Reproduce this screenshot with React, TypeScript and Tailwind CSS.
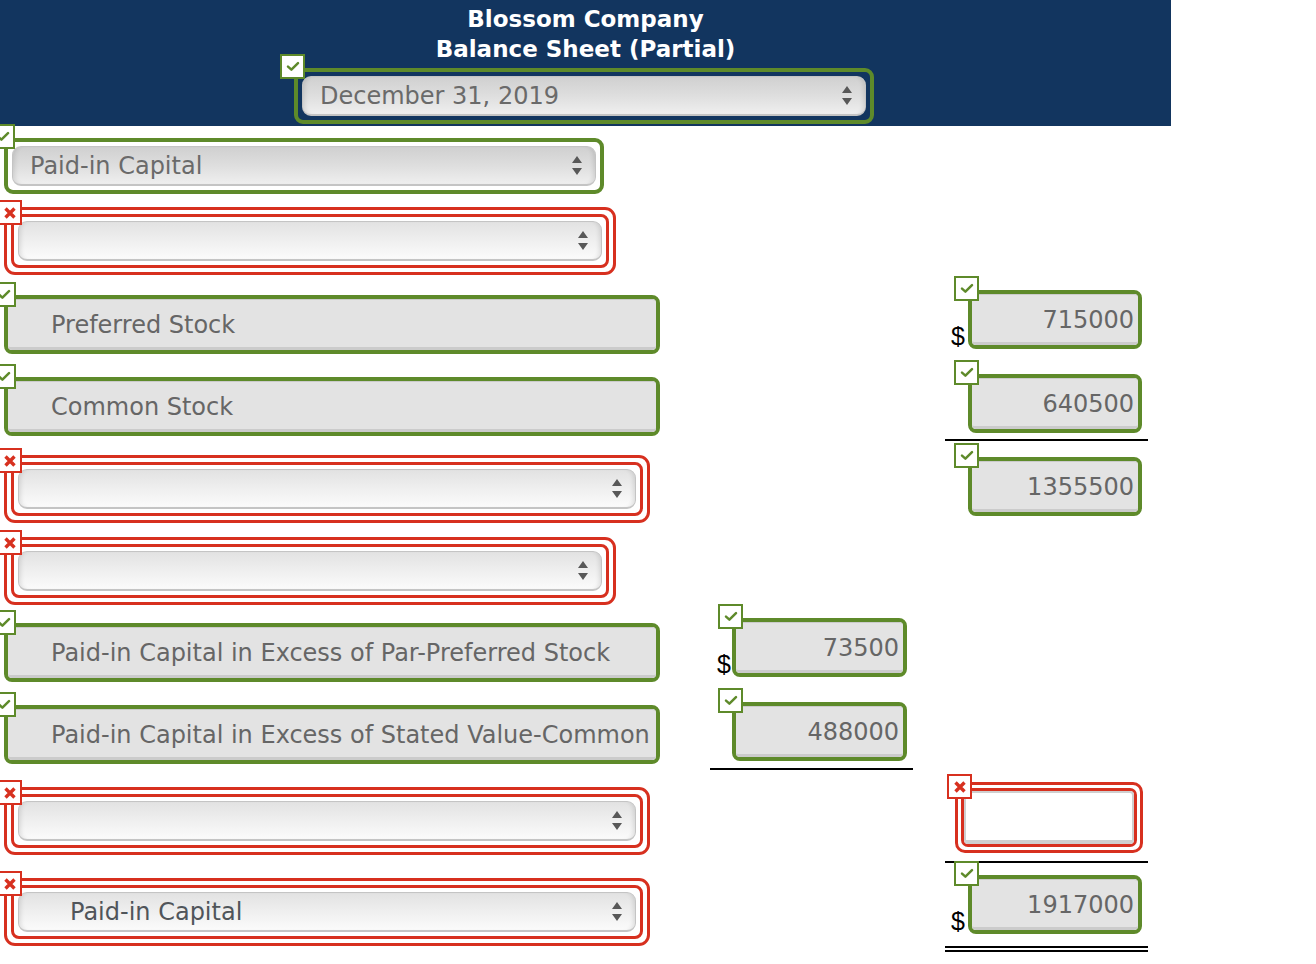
import React from "react";

function Ok({ className = "" }: { className?: string }) {
  return (
    <span
      className={`absolute z-10 flex h-[25px] w-[25px] items-center justify-center border-2 border-[#5e8a2a] bg-white ${className}`}
    >
      <svg width="14" height="11" viewBox="0 0 14 11">
        <path
          d="M2 5.6 L5.4 8.6 L12 2.2"
          fill="none"
          stroke="#5e8a2a"
          strokeWidth="2.5"
          strokeLinecap="round"
          strokeLinejoin="round"
        />
      </svg>
    </span>
  );
}

function Bad({ className = "" }: { className?: string }) {
  return (
    <span
      className={`absolute z-10 flex h-[25px] w-[25px] items-center justify-center border-2 border-[#d7301f] bg-white ${className}`}
    >
      <svg width="14" height="14" viewBox="0 0 14 14">
        <path d="M2.5 2.5 L11.5 11.5 M11.5 2.5 L2.5 11.5" fill="none" stroke="#d7301f" strokeWidth="3.4" />
      </svg>
    </span>
  );
}

function Arrows() {
  return (
    <svg width="10" height="20" viewBox="0 0 10 20" className="shrink-0">
      <path d="M5 0 L10 7 L0 7 Z M0 12 L10 12 L5 19 Z" fill="#585858" />
    </svg>
  );
}

// safari-style popup button
function SelectBox({
  text = "",
  className = "",
  light = false,
  pad = "pl-[17px]",
  color = "text-[#6a6a6a]",
}: {
  text?: string;
  className?: string;
  light?: boolean;
  pad?: string;
  color?: string;
}) {
  return (
    <div
      className={`flex h-[40px] items-center rounded-[9px] border border-b-2 border-[#c4c4c4] pr-[13px] shadow-[inset_5px_0_4px_-3px_rgba(0,0,0,0.1),inset_-5px_0_4px_-3px_rgba(0,0,0,0.1)] ${
        light
          ? "bg-linear-to-b from-[#e2e2e2] via-[#efefef] to-[#fbfbfb]"
          : "bg-linear-to-b from-[#d0d0d0] via-[#dedede] to-[#efefef]"
      } ${className}`}
    >
      <span className={`flex-1 whitespace-nowrap text-[24px] leading-[30px] ${pad} ${color}`}>
        {text}
      </span>
      <Arrows />
    </div>
  );
}

function GreenSelect({ text, wrap, sel }: { text: string; wrap: string; sel: string }) {
  return (
    <div className={`relative rounded-[9px] border-4 border-[#5e8a2a] p-[4px] ${wrap}`}>
      <Ok className="-left-[18px] -top-[18px]" />
      <SelectBox text={text} className={sel} />
    </div>
  );
}

function RedSelect({
  text = "",
  wrap,
  sel,
}: {
  text?: string;
  wrap: string;
  sel: string;
}) {
  return (
    <div className={`relative rounded-[11px] border-[3px] border-[#d7301f] p-[4px] ${wrap}`}>
      <Bad className="-left-[10px] -top-[10px]" />
      <div className="rounded-[8px] border-[3px] border-[#d7301f] p-[4px]">
        <SelectBox text={text} className={sel} light pad="pl-[51px]" color="text-[#50555a]" />
      </div>
    </div>
  );
}

function TextBox({ text }: { text: string }) {
  return (
    <div className="relative h-[59px] w-[656px] rounded-[8px] border-4 border-[#5e8a2a]">
      <Ok className="-left-[17px] -top-[17px]" />
      <div className="flex h-full items-center overflow-hidden whitespace-nowrap rounded-[4px] border-t border-b-[3px] border-[#cbcbcb] bg-[#e3e3e3] pl-[43px] pt-[3px] text-[24px] text-[#666]">
        {text}
      </div>
    </div>
  );
}

function NumBox({ value, w }: { value: string; w: string }) {
  return (
    <div className={`relative h-[59px] rounded-[8px] border-4 border-[#5e8a2a] ${w}`}>
      <Ok className="-left-[18px] -top-[18px]" />
      <div className="flex h-full items-center justify-end rounded-[4px] border-t border-b-[3px] border-[#cbcbcb] bg-[#e3e3e3] pr-[4px] pt-[3px] text-[24px] text-[#666]">
        {value}
      </div>
    </div>
  );
}

function Dollar({ w, show }: { w: string; show?: boolean }) {
  return (
    <span className={`shrink-0 font-['Liberation_Sans',Arial,sans-serif] text-[25px] leading-none text-black ${w}`}>
      {show ? "$" : ""}
    </span>
  );
}

export default function App() {
  return (
    <div className="min-h-screen bg-white font-['DejaVu_Sans',Verdana,sans-serif]">
      {/* Header */}
      <div className="h-[126px] w-[1171px] bg-[#12355f] pt-[4px]">
        <div className="text-center text-[23px] font-bold leading-[30px] text-white">
          Blossom Company
          <br />
          Balance Sheet (Partial)
        </div>
        <div className="ml-[294px] mt-[4px] w-[580px]">
          <GreenSelect text="December 31, 2019" wrap="w-[580px]" sel="w-[564px]" />
        </div>
      </div>

      {/* Row 1 */}
      <div className="flex h-[74px]">
        <div className="w-[710px] pl-[4px] pt-[12px]">
          <GreenSelect text="Paid-in Capital" wrap="w-[600px]" sel="w-[584px]" />
        </div>
      </div>

      {/* Row 2 */}
      <div className="flex h-[80px]">
        <div className="w-[710px] pl-[4px] pt-[7px]">
          <RedSelect wrap="w-[612px]" sel="w-[584px]" />
        </div>
      </div>

      {/* Row 3 */}
      <div className="flex h-[82px]">
        <div className="w-[710px] pl-[4px] pt-[15px]">
          <TextBox text="Preferred Stock" />
        </div>
        <div className="w-[203px]" />
        <div className="w-[32px]" />
        <div className="flex w-[203px] items-start pt-[10px]">
          <div className="flex items-end">
            <Dollar w="w-[23px] pl-[6px]" show />
            <NumBox value="715000" w="w-[174px]" />
          </div>
        </div>
      </div>

      {/* Row 4 */}
      <div className="flex h-[79px]">
        <div className="w-[710px] pl-[4px] pt-[15px]">
          <TextBox text="Common Stock" />
        </div>
        <div className="w-[203px]" />
        <div className="w-[32px]" />
        <div className="w-[203px] border-b-2 border-black pl-[23px] pt-[12px]">
          <NumBox value="640500" w="w-[174px]" />
        </div>
      </div>

      {/* Row 5 */}
      <div className="flex h-[84px]">
        <div className="w-[710px] pl-[4px] pt-[14px]">
          <RedSelect wrap="w-[646px]" sel="w-[618px]" />
        </div>
        <div className="w-[203px]" />
        <div className="w-[32px]" />
        <div className="w-[203px] pl-[23px] pt-[16px]">
          <NumBox value="1355500" w="w-[174px]" />
        </div>
      </div>

      {/* Row 6 */}
      <div className="flex h-[82px]">
        <div className="w-[710px] pl-[4px] pt-[12px]">
          <RedSelect wrap="w-[612px]" sel="w-[584px]" />
        </div>
      </div>

      {/* Row 7 */}
      <div className="flex h-[83px]">
        <div className="w-[710px] pl-[4px] pt-[16px]">
          <TextBox text="Paid-in Capital in Excess of Par-Preferred Stock" />
        </div>
        <div className="w-[203px] pt-[11px]">
          <div className="flex items-end">
            <Dollar w="w-[22px] pl-[7px]" show />
            <NumBox value="73500" w="w-[175px]" />
          </div>
        </div>
      </div>

      {/* Row 8 */}
      <div className="flex h-[80px]">
        <div className="w-[710px] pl-[4px] pt-[15px]">
          <TextBox text="Paid-in Capital in Excess of Stated Value-Common Stock" />
        </div>
        <div className="w-[203px] border-b-2 border-black pl-[22px] pt-[12px]">
          <NumBox value="488000" w="w-[175px]" />
        </div>
      </div>

      {/* Row 9 */}
      <div className="flex h-[93px]">
        <div className="w-[710px] pl-[4px] pt-[17px]">
          <RedSelect wrap="w-[646px]" sel="w-[618px]" />
        </div>
        <div className="w-[203px]" />
        <div className="w-[32px]" />
        <div className="w-[203px] border-b-2 border-black pl-[10px] pt-[12px]">
          <div className="relative w-[188px] rounded-[10px] border-[3px] border-[#d7301f] p-[3px]">
            <Bad className="-left-[11px] -top-[11px]" />
            <div className="rounded-[7px] border-[3px] border-[#d7301f]">
              <div className="h-[53px] rounded-[4px] border-2 border-b-4 border-[#cfcfcf] bg-white" />
            </div>
          </div>
        </div>
      </div>

      {/* Row 10 */}
      <div className="flex h-[89px]">
        <div className="w-[710px] pl-[4px] pt-[15px]">
          <RedSelect text="Paid-in Capital" wrap="w-[646px]" sel="w-[618px]" />
        </div>
        <div className="w-[203px]" />
        <div className="w-[32px]" />
        <div className="w-[203px] border-b-[6px] border-double border-black pt-[12px]">
          <div className="flex items-end">
            <Dollar w="w-[23px] pl-[6px]" show />
            <NumBox value="1917000" w="w-[174px]" />
          </div>
        </div>
      </div>
    </div>
  );
}
